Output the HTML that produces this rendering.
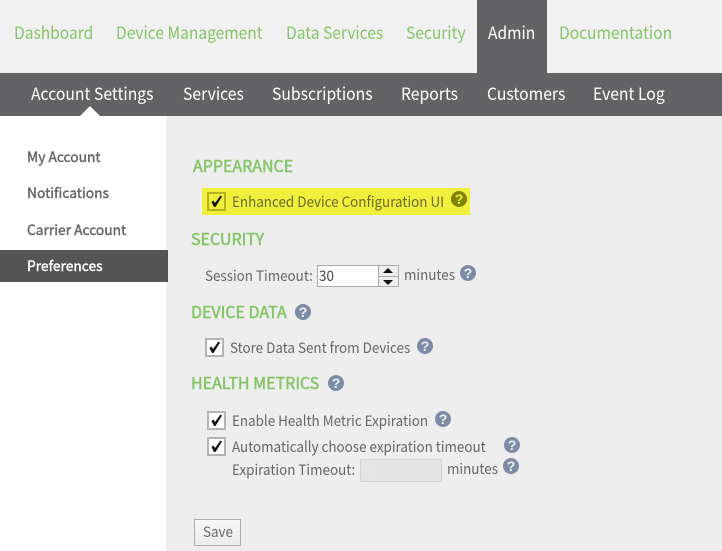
<!DOCTYPE html>
<html><head><meta charset="utf-8">
<style>
html,body{margin:0;padding:0}
body{width:722px;height:551px;position:relative;overflow:hidden;background:#eee;font-family:"Noto Sans CJK SC","Liberation Sans",sans-serif;color:#666}
.a{position:absolute;white-space:nowrap;line-height:20px;transform-origin:0 50%}
.box{position:absolute}
.t{font-size:17px;color:#84c567;top:22px;transform:scaleX(.915)}
.s{font-size:17px;color:#fff;top:83px;transform:scaleX(.925)}
.m{font-size:14px;color:#666;left:27px;-webkit-text-stroke:.4px currentColor;transform:scaleX(.985)}
.h{font-size:16px;color:#84c567;-webkit-text-stroke:.5px currentColor;transform:scaleX(1)}
.l{font-size:14.5px;color:#666;transform:scaleX(.925)}
.cb{position:absolute;width:15px;height:15px;border:2px solid #b4b4b4;background:#fff}
.cb svg{position:absolute;left:0;top:0}
.q{position:absolute;width:16px;height:16px;border-radius:50%;background:#7d8ca6;color:#eee;font:bold 14px/16px "Liberation Sans",sans-serif;text-align:center}
</style></head><body>
<div class="box" style="left:0;top:0;width:722px;height:73px;background:#f1f1f1"></div>
<div class="box" style="left:477px;top:0;width:70px;height:73px;background:#636365"></div>
<div class="box" style="left:0;top:73px;width:722px;height:43px;background:#636365"></div>
<div class="box" style="left:0;top:116px;width:166px;height:435px;background:#fff"></div>
<div class="box" style="left:80px;top:106px;width:0;height:0;border-left:10px solid transparent;border-right:10px solid transparent;border-bottom:10px solid #fff"></div>
<div class="box" style="left:0;top:250px;width:168px;height:32px;background:#555"></div>

<div class="a t" style="left:14px">Dashboard</div>
<div class="a t" style="left:116px">Device Management</div>
<div class="a t" style="left:286px">Data Services</div>
<div class="a t" style="left:406px">Security</div>
<div class="a t" style="left:488px;color:#fff">Admin</div>
<div class="a t" style="left:559px">Documentation</div>

<div class="a s" style="left:31px">Account Settings</div>
<div class="a s" style="left:183px">Services</div>
<div class="a s" style="left:272px">Subscriptions</div>
<div class="a s" style="left:401px">Reports</div>
<div class="a s" style="left:487px">Customers</div>
<div class="a s" style="left:593px">Event Log</div>

<div class="a m" style="top:147px">My Account</div>
<div class="a m" style="top:183px">Notifications</div>
<div class="a m" style="top:220px">Carrier Account</div>
<div class="a m" style="top:256px;color:#fff">Preferences</div>

<div class="a h" style="left:193px;top:155px">APPEARANCE</div>
<div class="box" style="left:202px;top:188px;width:268px;height:27px;background:#f0ef3c"></div>
<div class="cb" style="left:207px;top:192px;background:#f0ef3c;border-color:#b5b41f"><svg width="15" height="15"><path d="M2.5 8L4.5 6.5L6 9L11.5 1.5L13 2.5L6.5 13L5 13Z" fill="#111"/></svg></div>
<div class="a l" style="left:232px;top:192px;color:#6a6a2c">Enhanced Device Configuration UI</div>
<div class="q" style="left:451px;top:191px;background:#7f8400;color:#f0ef3c">?</div>

<div class="a h" style="left:191px;top:228px">SECURITY</div>
<div class="a l" style="left:205px;top:266px">Session Timeout:</div>
<div class="box" style="left:317px;top:265px;width:80px;height:20px;border:1px solid #aaa;background:#fff"></div>
<div class="a l" style="left:319px;top:266px;color:#444">30</div>
<div class="box" style="left:378px;top:265px;width:19px;height:20px;border:1px solid #aaa;background:#eee"></div>
<div class="box" style="left:378px;top:276px;width:21px;height:1px;background:#aaa"></div>
<div class="box" style="left:383px;top:268px;width:0;height:0;border-left:5px solid transparent;border-right:5px solid transparent;border-bottom:5px solid #111"></div>
<div class="box" style="left:383px;top:280px;width:0;height:0;border-left:5px solid transparent;border-right:5px solid transparent;border-top:5px solid #111"></div>
<div class="a l" style="left:404px;top:265px">minutes</div>
<div class="q" style="left:460px;top:265px">?</div>

<div class="a h" style="left:191px;top:301px">DEVICE DATA</div>
<div class="q" style="left:295px;top:304px">?</div>
<div class="cb" style="left:205px;top:338px"><svg width="15" height="15"><path d="M2.5 8L4.5 6.5L6 9L11.5 1.5L13 2.5L6.5 13L5 13Z" fill="#111"/></svg></div>
<div class="a l" style="left:230px;top:338px">Store Data Sent from Devices</div>
<div class="q" style="left:417px;top:338px">?</div>

<div class="a h" style="left:191px;top:372px">HEALTH METRICS</div>
<div class="q" style="left:328px;top:375px">?</div>
<div class="cb" style="left:207px;top:411px"><svg width="15" height="15"><path d="M2.5 8L4.5 6.5L6 9L11.5 1.5L13 2.5L6.5 13L5 13Z" fill="#111"/></svg></div>
<div class="a l" style="left:232px;top:411px">Enable Health Metric Expiration</div>
<div class="q" style="left:435px;top:411px">?</div>
<div class="cb" style="left:207px;top:437px"><svg width="15" height="15"><path d="M2.5 8L4.5 6.5L6 9L11.5 1.5L13 2.5L6.5 13L5 13Z" fill="#111"/></svg></div>
<div class="a l" style="left:232px;top:437px">Automatically choose expiration timeout</div>
<div class="q" style="left:504px;top:437px">?</div>
<div class="a l" style="left:232px;top:460px">Expiration Timeout:</div>
<div class="box" style="left:360px;top:459px;width:80px;height:21px;border:1px solid #d4d4d4;background:#e4e4e4"></div>
<div class="a l" style="left:363px;top:460px;color:#eaeaea">65</div>
<div class="a l" style="left:447px;top:459px">minutes</div>
<div class="q" style="left:503px;top:458px">?</div>

<div class="box" style="left:194px;top:519px;width:45px;height:25px;border:1px solid #aaa;background:linear-gradient(#f8f8f8,#ececec)"></div>
<div class="a l" style="left:203px;top:522px">Save</div>
</body></html>
